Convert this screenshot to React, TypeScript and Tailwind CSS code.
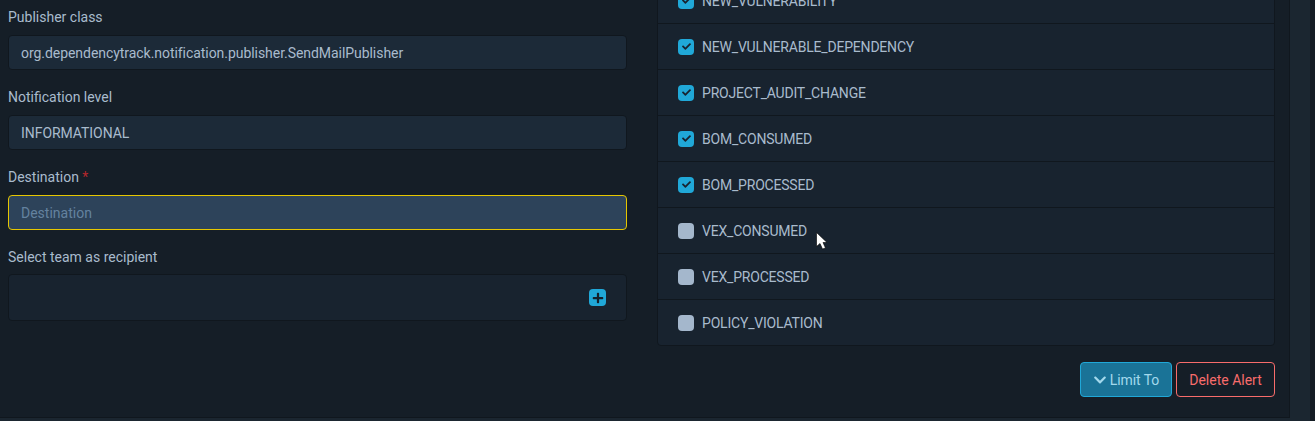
import { FaCheck, FaChevronDown, FaPlus } from "react-icons/fa"

const EVENTS = [
  { name: "NEW_VULNERABILITY", checked: true },
  { name: "NEW_VULNERABLE_DEPENDENCY", checked: true },
  { name: "PROJECT_AUDIT_CHANGE", checked: true },
  { name: "BOM_CONSUMED", checked: true },
  { name: "BOM_PROCESSED", checked: true },
  { name: "VEX_CONSUMED", checked: false },
  { name: "VEX_PROCESSED", checked: false },
  { name: "POLICY_VIOLATION", checked: false },
]

function EventRow({ name, checked }: { name: string; checked: boolean }) {
  return (
    <div className="flex h-[46px] items-center border-b border-[#10171e] pl-[20px] last:h-[45px] last:border-b-0">
      {checked ? (
        <span className="flex h-4 w-4 items-center justify-center rounded-[4px] bg-[#20a8d8] text-[#18232f]">
          <FaCheck className="h-[9px] w-[9px]" />
        </span>
      ) : (
        <span className="h-4 w-4 rounded-[4px] bg-[#a4b7cc]" />
      )}
      <span className="ml-2 text-sm tracking-[-0.2px] text-[#a9bbcd]">{name}</span>
    </div>
  )
}

function Field({ label, value }: { label: string; value: string }) {
  return (
    <div className="mb-[17px]">
      <div className="mb-2 h-5 text-sm leading-5 text-[#a9bbcd]">{label}</div>
      <div className="flex h-[35px] items-center rounded-[4px] border border-[#10171e] bg-[#1c2a38] px-3 text-sm tracking-[-0.05px] text-[#a9bbcd]">
        {value}
      </div>
    </div>
  )
}

export default function App() {
  return (
    <div className="relative flex h-[421px] w-[1315px] overflow-hidden bg-[#1b2630] font-['Roboto',sans-serif]">
      <div className="h-[418px] w-[1290px] border-r border-b border-[#10171e] bg-[#151e27]">
        <div className="flex gap-[30px] pl-2">
          <div className="w-[619px] pt-[7px]">
            <Field label="Publisher class" value="org.dependencytrack.notification.publisher.SendMailPublisher" />
            <Field label="Notification level" value="INFORMATIONAL" />
            <div className="mb-[17px]">
              <div className="mb-2 h-5 text-sm leading-5 text-[#a9bbcd]">
                Destination <span className="text-[#b3272c]">*</span>
              </div>
              <div className="flex h-[35px] items-center rounded-[4px] border border-[#e6c700] bg-[#2d435a] px-3 text-sm text-[#64829f]">
                Destination
              </div>
            </div>
            <div className="mb-[7px] h-5 text-sm leading-5 text-[#a9bbcd]">Select team as recipient</div>
            <div className="flex h-[47px] items-center justify-end rounded-[4px] border border-[#10171e] bg-[#18232f] pr-[20px]">
              <span className="flex h-[17px] w-[17px] items-center justify-center rounded-[4px] bg-[#20a8d8] text-[#14202b]">
                <FaPlus className="h-[12px] w-[12px]" />
              </span>
            </div>
          </div>
          <div className="w-[618px]">
            <div className="-mt-[23px] rounded-[4px] border border-[#10171e] bg-[#18232f]">
              {EVENTS.map((e) => (
                <EventRow key={e.name} name={e.name} checked={e.checked} />
              ))}
            </div>
            <div className="mt-4 flex justify-end gap-1">
              <button className="flex h-[35px] w-[92px] items-center justify-center gap-[3px] rounded-[4px] border border-[#20a8d8] bg-[#1a7397] text-sm tracking-[-0.1px] text-[#a3d9ec]">
                <FaChevronDown className="h-[14px] w-[14px]" />
                Limit To
              </button>
              <button className="h-[35px] w-[99px] rounded-[4px] border border-[#f86c6b] text-sm text-[#f86c6b]">
                Delete Alert
              </button>
            </div>
          </div>
        </div>
      </div>
      <div className="ml-[20px] w-[5px] bg-[#141c24]" />
      <svg className="absolute left-[816px] top-[232px]" width="12" height="18" viewBox="0 0 12 18">
        <path d="M0.5 0.5V14.5L4 11.5L6.5 17L9.5 16L7 10.5H11Z" fill="#fff" stroke="#000" strokeWidth="0.6" />
      </svg>
    </div>
  )
}
